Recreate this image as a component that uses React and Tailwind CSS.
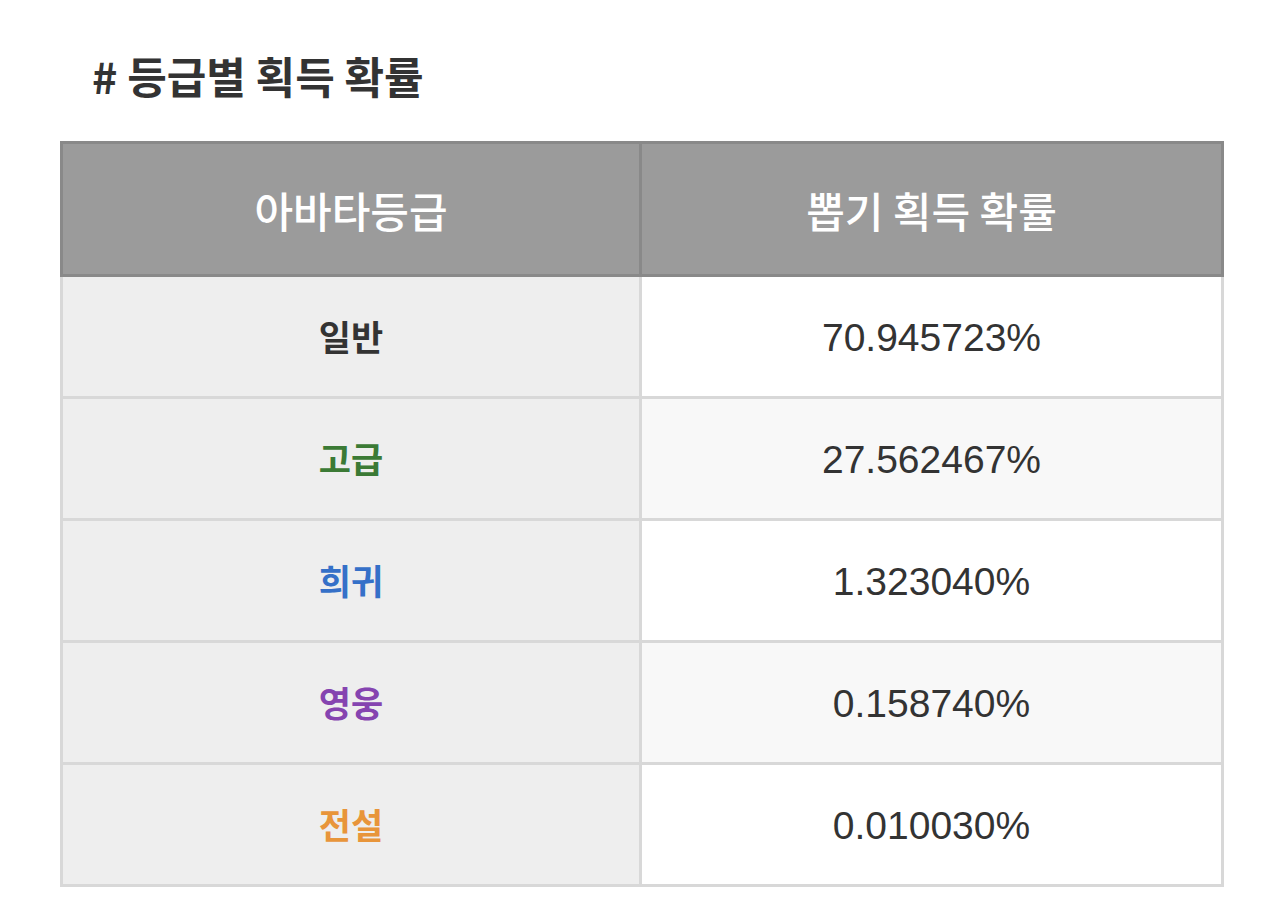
const ROWS = [
  { grade: '일반', color: 'text-[#333333]', rate: '70.945723%', bg: 'bg-white' },
  { grade: '고급', color: 'text-[#3b7a35]', rate: '27.562467%', bg: 'bg-[#f8f8f8]' },
  { grade: '희귀', color: 'text-[#3570c8]', rate: '1.323040%', bg: 'bg-white' },
  { grade: '영웅', color: 'text-[#8544b0]', rate: '0.158740%', bg: 'bg-[#f8f8f8]' },
  { grade: '전설', color: 'text-[#e8953a]', rate: '0.010030%', bg: 'bg-white' },
];

const FONT = { fontFamily: "'Noto Sans CJK KR', 'Noto Sans', sans-serif" };

export default function App() {
  return (
    <div className="w-[1273px] h-[903px] bg-white overflow-hidden" style={FONT}>
      <h2 className="pl-[92px] pt-[46px] text-[43px] leading-[58px] font-bold text-[#333333]">
        # 등급별 획득 확률
      </h2>
      <table className="ml-[60px] mt-[37px] w-[1164px] border-collapse table-fixed">
        <thead>
          <tr className="h-[133px]">
            <th className="w-[579px] bg-[#9b9b9b] border-[3px] border-[#898989] text-white text-[42px] font-medium">
              아바타등급
            </th>
            <th className="bg-[#9b9b9b] border-[3px] border-[#898989] text-white text-[42px] font-medium">
              뽑기 획득 확률
            </th>
          </tr>
        </thead>
        <tbody>
          {ROWS.map((row) => (
            <tr key={row.grade} className="h-[122px]">
              <td className={`bg-[#eeeeee] border-[3px] border-[#d8d8d8] text-center text-[35px] font-bold ${row.color}`}>
                {row.grade}
              </td>
              <td
                className={`${row.bg} border-[3px] border-[#d8d8d8] text-center text-[39px] text-[#333333] pt-[3px]`}
                style={{ fontFamily: "'Liberation Sans', Arial, sans-serif" }}
              >
                {row.rate}
              </td>
            </tr>
          ))}
        </tbody>
      </table>
    </div>
  );
}
